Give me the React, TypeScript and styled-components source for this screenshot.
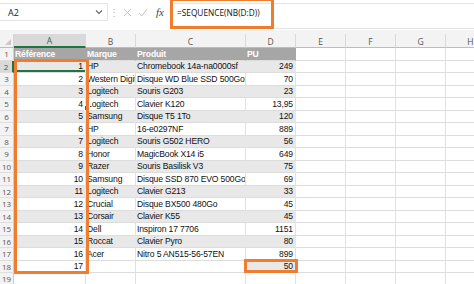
import React from 'react';
import styled, { createGlobalStyle } from 'styled-components';

const Global = createGlobalStyle`
  html, body { margin: 0; padding: 0; background: #fff; }
  body { font-family: "Liberation Sans", Arial, sans-serif; }
`;

const Window = styled.div`
  width: 474px;
  height: 284px;
  overflow: hidden;
  background: #fff;
  display: flex;
  flex-direction: column;
`;

const FormulaBar = styled.div`
  position: relative;
  flex: none;
  height: 30px;
  box-sizing: border-box;
  padding-top: 3px;
  display: flex;
  align-items: flex-start;
  background: #fff;
`;

const NameBox = styled.div`
  width: 108px;
  height: 18px;
  box-sizing: border-box;
  border: 1px solid #e4e4e4;
  border-left: none;
  display: flex;
  align-items: center;
  justify-content: space-between;
  padding: 0 4px 0 8px;
  font-family: "Open Sans", "Liberation Sans", sans-serif;
  font-size: 9px;
  color: #222;
`;

const Tools = styled.div`
  width: 62px;
  height: 18px;
  display: flex;
  align-items: center;
  color: #b8b8b8;
  font-size: 10px;
`;

const Tool = styled.span<{ $w: number; $color?: string; $italic?: boolean }>`
  width: ${(p) => p.$w}px;
  display: flex;
  justify-content: center;
  align-items: center;
  color: ${(p) => p.$color || '#c0c0c0'};
  font-style: ${(p) => (p.$italic ? 'italic' : 'normal')};
  font-family: ${(p) => (p.$italic ? '"Liberation Serif", serif' : 'inherit')};
  font-size: ${(p) => (p.$italic ? '11px' : '10px')};
`;

const FormulaInput = styled.div`
  flex: 1;
  height: 26px;
  box-sizing: border-box;
  border: 1px solid #e4e4e4;
  border-right: none;
  padding: 3px 0 0 6px;
  font-family: "Open Sans", "Liberation Sans", sans-serif;
  font-size: 8.3px;
  line-height: 12px;
  color: #111;
`;

const Strip = styled.div`
  flex: none;
  height: 4px;
  background: #f3f3f3;
`;

const Sheet = styled.div`
  position: relative;
  flex: none;
  display: grid;
  grid-template-columns: 14px 72px 50px 110px 50px 50px 50px 50px 50px;
  grid-template-rows: 14px repeat(19, 12.5px);
`;

const Corner = styled.div`
  position: relative;
  background: #f3f3f3;
  border-right: 1px solid #d6d6d6;
  border-bottom: 1px solid #bdbdbd;
  box-sizing: border-box;
  &::after {
    content: '';
    position: absolute;
    right: 2px;
    bottom: 2px;
    border-left: 6px solid transparent;
    border-bottom: 6px solid #c9c9c9;
  }
`;

const ColHead = styled.div<{ $active?: boolean }>`
  box-sizing: border-box;
  background: ${(p) => (p.$active ? '#d9d9d9' : '#f3f3f3')};
  border-right: 1px solid #dadada;
  border-bottom: ${(p) => (p.$active ? '2px solid #217346' : '1px solid #bdbdbd')};
  display: flex;
  align-items: center;
  justify-content: center;
  padding-top: 1px;
  font-family: "Open Sans", "Liberation Sans", sans-serif;
  font-size: 8.5px;
  color: ${(p) => (p.$active ? '#1f6e43' : '#555')};
`;

const RowHead = styled.div<{ $active?: boolean }>`
  box-sizing: border-box;
  background: ${(p) => (p.$active ? '#d9d9d9' : '#f3f3f3')};
  border-right: ${(p) => (p.$active ? '2px solid #217346' : '1px solid #cfcfcf')};
  border-bottom: 1px solid #dedede;
  display: flex;
  align-items: center;
  justify-content: center;
  font-family: "Open Sans", "Liberation Sans", sans-serif;
  font-size: 8px;
  color: ${(p) => (p.$active ? '#1f6e43' : '#555')};
`;

const Cell = styled.div<{
  $fill?: string;
  $right?: boolean;
  $bold?: boolean;
  $light?: boolean;
  $selected?: boolean;
}>`
  position: relative;
  box-sizing: border-box;
  background: ${(p) => p.$fill || '#fff'};
  border-right: 1px solid ${(p) => (p.$fill ? p.$fill : '#e1e1e1')};
  border-bottom: 1px solid #dcdcdc;
  padding: 0 2px 0 1px;
  display: flex;
  align-items: center;
  justify-content: ${(p) => (p.$right ? 'flex-end' : 'flex-start')};
  font-size: 8.6px;
  letter-spacing: -0.15px;
  font-weight: ${(p) => (p.$bold ? 700 : 400)};
  color: ${(p) => (p.$light ? '#fff' : '#111')};
  white-space: nowrap;
  overflow: hidden;
  ${(p) => (p.$selected ? 'box-shadow: inset 0 -2px 0 #217346;' : '')}
`;

const Handle = styled.div`
  position: absolute;
  left: 84px;
  top: 70.5px;
  width: 4px;
  height: 4px;
  background: #217346;
  border: 1px solid #fff;
`;

const Highlight = styled.div<{ $x: number; $y: number; $w: number; $h: number }>`
  position: absolute;
  left: ${(p) => p.$x}px;
  top: ${(p) => p.$y}px;
  width: ${(p) => p.$w}px;
  height: ${(p) => p.$h}px;
  box-sizing: border-box;
  border: 3px solid #ef7d2d;
  pointer-events: none;
`;

const cols = ['A', 'B', 'C', 'D', 'E', 'F', 'G', 'H'];

const rows: [string, string, string, string][] = [
  ['1', 'HP', 'Chromebook 14a-na0000sf', '249'],
  ['2', 'Western Digital', 'Disque WD Blue SSD 500Go', '70'],
  ['3', 'Logitech', 'Souris G203', '23'],
  ['4', 'Logitech', 'Clavier K120', '13,95'],
  ['5', 'Samsung', 'Disque T5 1To', '120'],
  ['6', 'HP', '16-e0297NF', '889'],
  ['7', 'Logitech', 'Souris G502 HERO', '56'],
  ['8', 'Honor', 'MagicBook X14 i5', '649'],
  ['9', 'Razer', 'Souris Basilisk V3', '75'],
  ['10', 'Samsung', 'Disque SSD 870 EVO 500Go', '69'],
  ['11', 'Logitech', 'Clavier G213', '33'],
  ['12', 'Crucial', 'Disque BX500 480Go', '45'],
  ['13', 'Corsair', 'Clavier K55', '45'],
  ['14', 'Dell', 'Inspiron 17 7706', '1151'],
  ['15', 'Roccat', 'Clavier Pyro', '80'],
  ['16', 'Acer', 'Nitro 5 AN515-56-57EN', '899'],
  ['17', '', '', '50'],
];

const HEAD = '#a6a6a6';
const BAND = '#e8e8e8';

const Chevron = () => (
  <svg width="8" height="6" viewBox="0 0 8 6">
    <path d="M1 1.5 L4 4.5 L7 1.5" fill="none" stroke="#666" strokeWidth="1.1" />
  </svg>
);

const Cross = () => (
  <svg width="9" height="9" viewBox="0 0 9 9">
    <path d="M1 1 L8 8 M8 1 L1 8" stroke="#c4c4c4" strokeWidth="1" />
  </svg>
);

const Check = () => (
  <svg width="10" height="9" viewBox="0 0 10 9">
    <path d="M1 5 L3.8 8 L9 1" fill="none" stroke="#c4c4c4" strokeWidth="1" />
  </svg>
);

export default function App() {
  return (
    <>
      <Global />
      <Window>
        <FormulaBar>
          <NameBox>
            <span>A2</span>
            <Chevron />
          </NameBox>
          <Tools>
            <Tool $w={12} $color="#b5b5b5">⋮</Tool>
            <Tool $w={15}>
              <Cross />
            </Tool>
            <Tool $w={15}>
              <Check />
            </Tool>
            <Tool $w={20} $color="#444" $italic>
              fx
            </Tool>
          </Tools>
          <FormulaInput>=SEQUENCE(NB(D:D))</FormulaInput>
          <Highlight $x={170} $y={-2} $w={104} $h={31} />
        </FormulaBar>
        <Strip />
        <Sheet>
          <Corner />
          {cols.map((c) => (
            <ColHead key={c} $active={c === 'A'}>
              {c}
            </ColHead>
          ))}
          <RowHead>1</RowHead>
          <Cell $fill={HEAD} $bold $light>Référence</Cell>
          <Cell $fill={HEAD} $bold $light>Marque</Cell>
          <Cell $fill={HEAD} $bold $light>Produit</Cell>
          <Cell $fill={HEAD} $bold $light>PU</Cell>
          <Cell />
          <Cell />
          <Cell />
          <Cell />
          {rows.map((r, i) => {
            const rowNum = i + 2;
            const inTable = rowNum <= 17;
            const fill = inTable && rowNum % 2 === 0 ? BAND : undefined;
            const dFill = rowNum === 18 ? BAND : fill;
            return (
              <React.Fragment key={rowNum}>
                <RowHead $active={rowNum === 2}>{rowNum}</RowHead>
                <Cell $right $fill={fill} $selected={rowNum === 2}>{r[0]}</Cell>
                <Cell $fill={fill}>{r[1]}</Cell>
                <Cell $fill={fill}>{r[2]}</Cell>
                <Cell $right $fill={dFill}>{r[3]}</Cell>
                <Cell />
                <Cell />
                <Cell />
                <Cell />
              </React.Fragment>
            );
          })}
          <RowHead>19</RowHead>
          {cols.map((c) => (
            <Cell key={c} />
          ))}
          <Handle />
          <Highlight $x={14} $y={24.5} $w={75} $h={215} />
          <Highlight $x={244} $y={225} $w={54} $h={14} />
        </Sheet>
      </Window>
    </>
  );
}
